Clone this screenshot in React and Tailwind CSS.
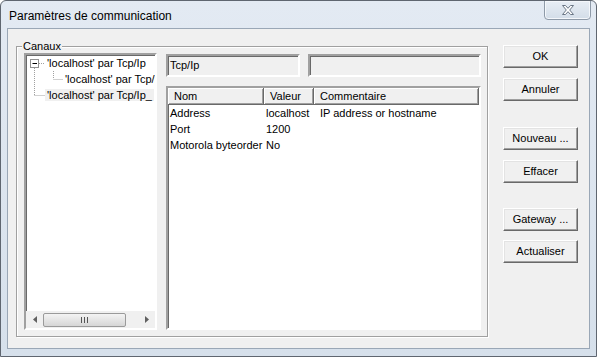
import React from 'react';

const sunken =
  'border-2 border-t-[#a0a0a0] border-l-[#a0a0a0] border-b-white border-r-white shadow-[inset_1px_1px_0_#696969]';

function Btn({ children, className = '' }) {
  return (
    <div
      className={`w-[75px] h-[23px] flex items-center justify-center bg-[#f0f0f0] border border-t-white border-l-white border-r-[#696969] border-b-[#696969] shadow-[inset_-1px_-1px_0_#a0a0a0,inset_1px_1px_0_#e3e3e3] text-[11px] text-black ${className}`}
    >
      {children}
    </div>
  );
}

function TreeView() {
  return (
    <div className={`w-[133px] h-[277px] bg-white flex flex-col ${sunken}`}>
      <div className="relative flex-1 overflow-hidden">
        <svg className="absolute left-0 top-0" width="131" height="60">
          <g stroke="#a0a0a0" strokeWidth="1" strokeDasharray="1 1" fill="none">
            <line x1="13" y1="8.5" x2="19" y2="8.5" />
            <line x1="8.5" y1="13" x2="8.5" y2="40" />
            <line x1="8.5" y1="40.5" x2="19" y2="40.5" />
            <line x1="27.5" y1="16" x2="27.5" y2="24" />
            <line x1="27.5" y1="24.5" x2="37" y2="24.5" />
          </g>
          <rect x="4.5" y="4.5" width="8" height="8" fill="white" stroke="#919191" />
          <line x1="6.5" y1="8.5" x2="11" y2="8.5" stroke="#000" />
        </svg>
        <div className="relative flex flex-col text-[11px] leading-[16px] whitespace-nowrap">
          <div className="h-[16px] pl-[21px]">'localhost' par Tcp/Ip</div>
          <div className="h-[16px] pl-[39px]">'localhost' par Tcp/Ip</div>
          <div className="h-[16px] pl-[19px]">
            <span className="bg-[#f0f0f0] px-[2px]">'localhost' par Tcp/Ip_</span>
          </div>
        </div>
      </div>
      <div className="h-[17px] bg-[#f0f0f0] flex items-center">
        <div className="w-[17px] h-[17px] flex items-center justify-center">
          <svg width="4" height="7"><polygon points="4,0 4,7 0,3.5" fill="#606060" /></svg>
        </div>
        <div className="w-[83px] h-[14px] ml-[0px] rounded-[2px] border border-[#9a9a9a] bg-gradient-to-b from-[#f4f4f4] to-[#d6d6d6] flex items-center justify-center">
          <svg width="7" height="6">
            <g stroke="#555" strokeWidth="1">
              <line x1="0.5" y1="0" x2="0.5" y2="6" />
              <line x1="3.5" y1="0" x2="3.5" y2="6" />
              <line x1="6.5" y1="0" x2="6.5" y2="6" />
            </g>
          </svg>
        </div>
        <div className="flex-1" />
        <div className="w-[17px] h-[17px] flex items-center justify-center">
          <svg width="4" height="7"><polygon points="0,0 0,7 4,3.5" fill="#606060" /></svg>
        </div>
      </div>
    </div>
  );
}

function Header({ children, className = '' }) {
  return (
    <div
      className={`h-[17px] flex items-center pl-[6px] bg-[#f0f0f0] border-r border-b border-r-[#696969] border-b-[#696969] shadow-[inset_1px_1px_0_white,inset_-1px_-1px_0_#a0a0a0] ${className}`}
    >
      {children}
    </div>
  );
}

const rows = [
  ['Address', 'localhost', 'IP address or hostname'],
  ['Port', '1200', ''],
  ['Motorola byteorder', 'No', ''],
];

function ListView() {
  return (
    <div className={`w-[315px] h-[244px] bg-white mt-[9px] flex flex-col overflow-hidden ${sunken}`}>
      <div className="flex text-[11px]">
        <Header className="w-[96px]">Nom</Header>
        <Header className="w-[50px]">Valeur</Header>
        <Header className="flex-1">Commentaire</Header>
      </div>
      {rows.map((r) => (
        <div key={r[0]} className="flex h-[16px] items-center text-[11px] whitespace-nowrap">
          <div className="w-[96px] pl-[2px]">{r[0]}</div>
          <div className="w-[50px] pl-[2px]">{r[1]}</div>
          <div className="flex-1 pl-[6px]">{r[2]}</div>
        </div>
      ))}
    </div>
  );
}

export default function App() {
  return (
    <div
      className="w-[597px] h-[357px] flex flex-col bg-gradient-to-b from-[#e3eaf3] to-[#d6e0eb] border border-[#5f6670] rounded-t-[6px] text-black overflow-hidden"
      style={{ fontFamily: '"Liberation Sans", Arial, sans-serif' }}
    >
      {/* title bar */}
      <div className="relative h-[27px] flex items-center pl-[8px] pt-[2px] shrink-0">
        <span className="text-[12px] text-black">Paramètres de communication</span>
        <div className="absolute top-[-1px] right-[5px] w-[47px] h-[20px] rounded-b-[4px] border border-[#8e9aa8] bg-gradient-to-b from-[#e8eef5] to-[#d3dde8] shadow-[inset_0_0_0_1px_#f4f7fb] flex items-center justify-center">
          <svg width="14" height="12" viewBox="0 0 14 12">
            <path
              d="M1.5 1.5 L4.5 1.5 L7 4.3 L9.5 1.5 L12.5 1.5 L8.7 6 L12.5 10.5 L9.5 10.5 L7 7.7 L4.5 10.5 L1.5 10.5 L5.3 6 Z"
              fill="#ffffff"
              stroke="#6b7786"
              strokeWidth="1"
              strokeLinejoin="round"
            />
          </svg>
        </div>
      </div>

      {/* client area */}
      <div className="flex-1 ml-[6px] mr-[6px] mb-[7px] border border-[#9aa7b6] bg-[#f0f0f0] flex items-start">
        {/* group box */}
        <div className="relative ml-[8px] mt-[17px] w-[472px] h-[291px] border border-[#a0a0a0] shadow-[inset_1px_1px_0_white,1px_1px_0_white] pl-[7px] pt-[6px] pr-[6px] pb-[6px] flex gap-[9px]">
          <span className="absolute top-[-8px] left-[5px] px-[1px] bg-[#f0f0f0] text-[11px] leading-[14px]">
            Canaux
          </span>
          <TreeView />
          <div className="flex flex-col pt-px">
            <div className="flex gap-[8px]">
              <div className={`w-[134px] h-[23px] bg-[#f0f0f0] flex items-center pl-[2px] text-[11px] ${sunken}`}>
                Tcp/Ip
              </div>
              <div className={`w-[173px] h-[23px] bg-[#f0f0f0] ${sunken}`} />
            </div>
            <ListView />
          </div>
        </div>

        {/* buttons */}
        <div className="ml-[15px] mt-[16px] flex flex-col">
          <Btn>OK</Btn>
          <Btn className="mt-[10px]">Annuler</Btn>
          <Btn className="mt-[26px]">Nouveau ...</Btn>
          <Btn className="mt-[10px]">Effacer</Btn>
          <Btn className="mt-[25px]">Gateway ...</Btn>
          <Btn className="mt-[9px]">Actualiser</Btn>
        </div>
      </div>
    </div>
  );
}
